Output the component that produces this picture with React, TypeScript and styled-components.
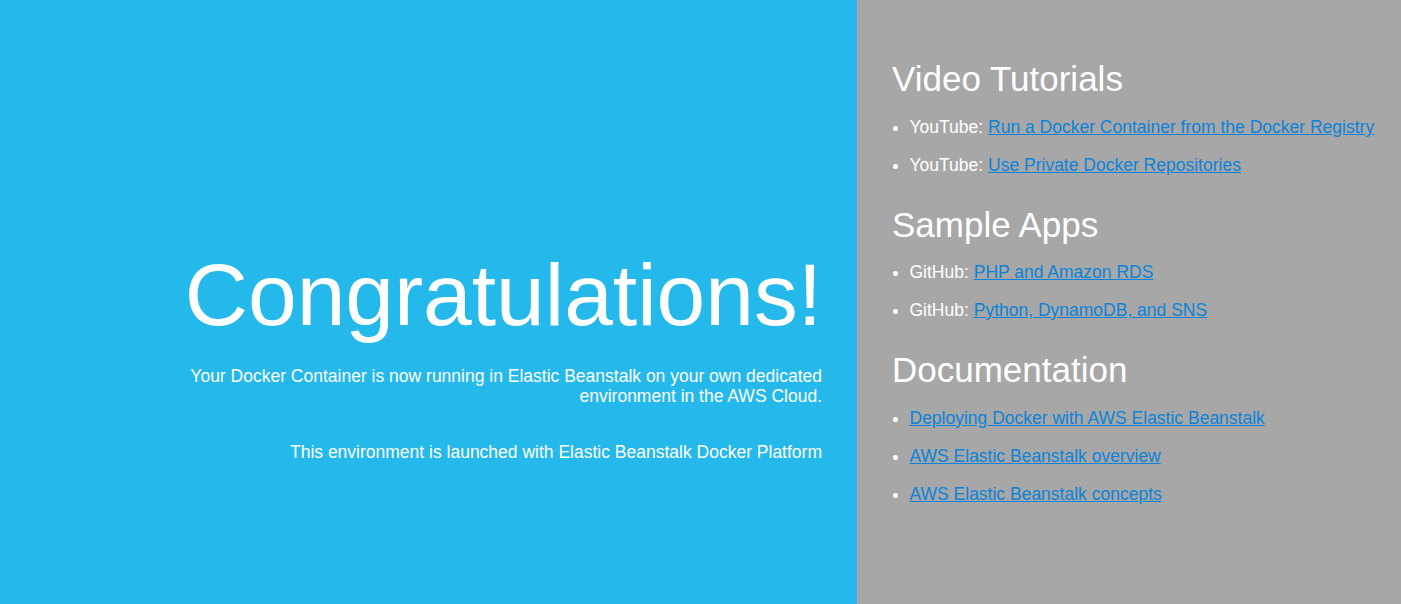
import React from 'react'
import styled, { createGlobalStyle } from 'styled-components'

interface LinkItem {
  label?: string
  text: string
  href: string
}

interface Section {
  title: string
  items: LinkItem[]
}

const sections: Section[] = [
  {
    title: 'Video Tutorials',
    items: [
      { label: 'YouTube:', text: 'Run a Docker Container from the Docker Registry', href: '#' },
      { label: 'YouTube:', text: 'Use Private Docker Repositories', href: '#' },
    ],
  },
  {
    title: 'Sample Apps',
    items: [
      { label: 'GitHub:', text: 'PHP and Amazon RDS', href: '#' },
      { label: 'GitHub:', text: 'Python, DynamoDB, and SNS', href: '#' },
    ],
  },
  {
    title: 'Documentation',
    items: [
      { text: 'Deploying Docker with AWS Elastic Beanstalk', href: '#' },
      { text: 'AWS Elastic Beanstalk overview', href: '#' },
      { text: 'AWS Elastic Beanstalk concepts', href: '#' },
    ],
  },
]

const App: React.FC = () => {
  return (
    <>
      <GlobalStyle />
      <Page>
        <TextColumn>
          <Headline>Congratulations!</Headline>
          <Message>
            Your Docker Container is now running in Elastic Beanstalk on your own dedicated
            environment in the AWS Cloud.
          </Message>
          <Message>This environment is launched with Elastic Beanstalk Docker Platform</Message>
        </TextColumn>

        <LinksColumn>
          {sections.map(section => (
            <React.Fragment key={section.title}>
              <SectionTitle>{section.title}</SectionTitle>
              <LinkList>
                {section.items.map(item => (
                  <LinkRow key={item.text}>
                    {item.label && <>{item.label} </>}
                    <Link href={item.href}>{item.text}</Link>
                  </LinkRow>
                ))}
              </LinkList>
            </React.Fragment>
          ))}
        </LinksColumn>
      </Page>
    </>
  )
}

export default App

// ========================================
// STYLED COMPONENTS
// ========================================

const GlobalStyle = createGlobalStyle`
  html, body {
    margin: 0;
    padding: 0;
    height: 100%;
  }

  body {
    color: #ffffff;
    background-color: #a7a7a7;
    font-family: "Liberation Sans", Arial, sans-serif;
    font-size: 17.5px;
  }
`

const Page = styled.div`
  display: flex;
  min-height: 100vh;
`

const TextColumn = styled.div`
  width: 857px;
  flex-shrink: 0;
  box-sizing: border-box;
  padding: 245px 35px 35px;
  background-color: #25b8eb;
  text-align: right;
  display: flex;
  flex-direction: column;
  align-items: flex-end;
`

const Headline = styled.h1`
  margin: 0;
  font-size: 87.5px;
  font-weight: normal;
  line-height: 100px;
`

const Message = styled.p`
  margin: 21px 0 0;
  max-width: 660px;
  line-height: 20px;

  & + & {
    margin-top: 36px;
  }
`

const LinksColumn = styled.div`
  flex: 1;
  box-sizing: border-box;
  padding: 59px 20px 35px 35px;
  background-color: #a7a7a7;
`

const SectionTitle = styled.h2`
  margin: 29.5px 0 0;
  font-size: 35px;
  font-weight: normal;
  line-height: 40px;

  &:first-child {
    margin-top: 0;
  }
`

const LinkList = styled.ul`
  margin: 0;
  padding-left: 17.5px;
`

const LinkRow = styled.li`
  margin: 17.5px 0;
  line-height: 20.5px;
  white-space: nowrap;
`

const Link = styled.a`
  color: #0b83d9;
  text-decoration: underline;
`
